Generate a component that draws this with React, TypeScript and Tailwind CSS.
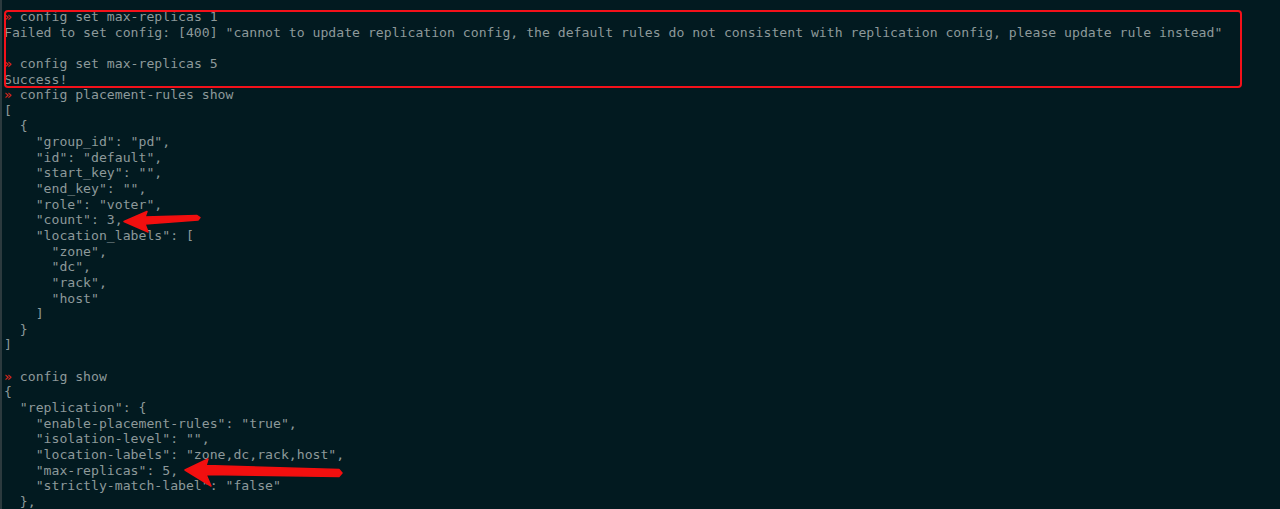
const lines: { p?: boolean; t: string }[] = [
  { p: true, t: "config set max-replicas 1" },
  {
    t: 'Failed to set config: [400] "cannot to update replication config, the default rules do not consistent with replication config, please update rule instead"',
  },
  { t: "" },
  { p: true, t: "config set max-replicas 5" },
  { t: "Success!" },
  { p: true, t: "config placement-rules show" },
  { t: "[" },
  { t: "  {" },
  { t: '    "group_id": "pd",' },
  { t: '    "id": "default",' },
  { t: '    "start_key": "",' },
  { t: '    "end_key": "",' },
  { t: '    "role": "voter",' },
  { t: '    "count": 3,' },
  { t: '    "location_labels": [' },
  { t: '      "zone",' },
  { t: '      "dc",' },
  { t: '      "rack",' },
  { t: '      "host"' },
  { t: "    ]" },
  { t: "  }" },
  { t: "]" },
  { t: "" },
  { p: true, t: "config show" },
  { t: "{" },
  { t: '  "replication": {' },
  { t: '    "enable-placement-rules": "true",' },
  { t: '    "isolation-level": "",' },
  { t: '    "location-labels": "zone,dc,rack,host",' },
  { t: '    "max-replicas": 5,' },
  { t: '    "strictly-match-label": "false"' },
  { t: "  }," },
];

const Arrow1 = () => (
  <svg className="absolute left-[119px] top-[206px]" width="82" height="30" viewBox="0 0 82 30">
    <polygon
      points="3,15.5 26,5.5 24,11 76,9.5 79,11.5 77,14 24,18 27,26"
      fill="#f20f0f"
      stroke="#f20f0f"
      strokeWidth="1.5"
      strokeLinejoin="round"
    />
  </svg>
);

const Arrow2 = () => (
  <svg className="absolute left-[179px] top-[455px]" width="166" height="34" viewBox="0 0 166 34">
    <polygon
      points="4,15 27,4 25,10.5 158,14.5 161,18 158,21.5 25,19.5 30,31"
      fill="#f20f0f"
      stroke="#f20f0f"
      strokeWidth="1.5"
      strokeLinejoin="round"
    />
  </svg>
);

export default function App() {
  return (
    <div className="relative h-[509px] w-[1280px] overflow-hidden border-l-2 border-[#2c3a3e] bg-[#021a20]">
      <div
        className="pl-[2px] pt-[9px] text-[13.15px] leading-[15.65px] text-[#8d999a] whitespace-pre"
        style={{ fontFamily: '"DejaVu Sans Mono", "Liberation Mono", monospace' }}
      >
        {lines.map((l, i) => (
          <div key={i} className="h-[15.65px]">
            {l.p && <span className="text-[#e8281c]">» </span>}
            {l.t}
          </div>
        ))}
      </div>
      <div className="absolute left-[2px] top-[10px] h-[78px] w-[1238px] rounded-[4px] border-2 border-[#f4111a]" />
      <Arrow1 />
      <Arrow2 />
    </div>
  );
}
